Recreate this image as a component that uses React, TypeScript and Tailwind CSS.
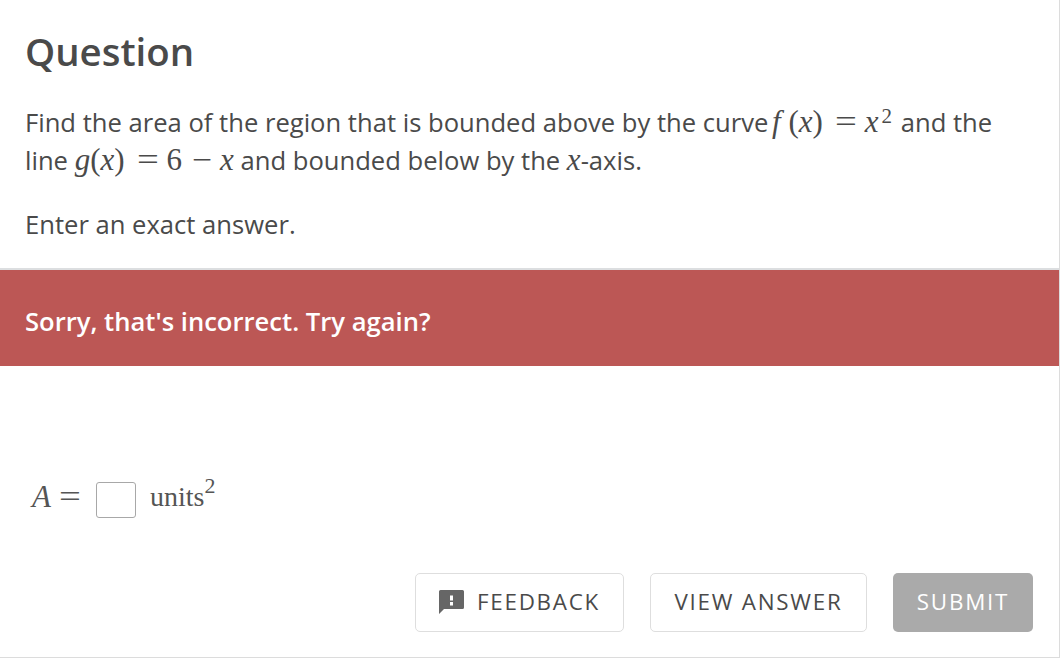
const sans = "font-['Open_Sans',sans-serif]";

function MathText({ children }: { children: React.ReactNode }) {
  return (
    <span className="font-['Liberation_Serif',serif] text-[31px] leading-none whitespace-nowrap">
      {children}
    </span>
  );
}

function Ital({ children }: { children: React.ReactNode }) {
  return <i className="italic">{children}</i>;
}

function Equals() {
  return (
    <span className="mr-[7px] ml-[11px] inline-block w-[24px] scale-x-[1.25] text-center">=</span>
  );
}

function Minus() {
  return (
    <span className="mr-[6px] ml-[8px] inline-block w-[24px] scale-x-[1.15] text-center">−</span>
  );
}

export default function App() {
  return (
    <div className={`${sans} flex h-[658px] w-[1060px] flex-col border-r border-b border-[#dcdcdc] bg-white text-[#4a4a4a]`}>
      {/* Question text */}
      <div className="h-[268px] shrink-0 px-[25px] pt-[26px]">
        <h1 className="text-[38.4px] leading-[50px] font-semibold">Question</h1>
        <p className="mt-[28px] text-[25.6px] leading-[38px]">
          Find the area of the region that is bounded above by the curve{" "}
          <MathText>
            <span className="-ml-[3px]">
              <Ital>f</Ital> (<Ital>x</Ital>)
            </span>
            <Equals />
            <Ital>x</Ital>
            <sup className="mr-[2px] ml-[3px] align-[-1px] text-[21px] leading-none">2</sup>
          </MathText>{" "}
          and the
          <br />
          line{" "}
          <MathText>
            <Ital>g</Ital>(<Ital>x</Ital>)
            <Equals />
            6
            <Minus />
            <Ital>x</Ital>
          </MathText>{" "}
          and bounded below by the{" "}
          <MathText>
            <Ital>x</Ital>
          </MathText>
          -axis.
        </p>
        <p className="mt-[26px] text-[25.6px] leading-[38px]">Enter an exact answer.</p>
      </div>

      {/* Result banner */}
      <div className="flex h-[98px] shrink-0 items-center border-t-2 border-[#dcdee0] bg-[#bc5755] px-[25px] pt-[9px] text-[25.6px] font-semibold text-white">
        Sorry, that's incorrect. Try again?
      </div>

      {/* Answer */}
      <div className="flex h-[207px] shrink-0 items-start pt-[113px] pl-[32px] font-['Liberation_Serif',serif] text-[#555555]">
        <span className="text-[31px] leading-[35px] whitespace-nowrap">
          <Ital>A</Ital>
          <span className="ml-[7px] inline-block w-[24px] scale-x-[1.25] text-center">=</span>
        </span>
        <div className="mt-[3px] ml-[14px] h-[36px] w-[40px] rounded-[3px] border border-[#a8a8a8] bg-white" />
        <span className="ml-[14px] text-[28px] leading-[35px]">
          units<sup className="align-[2px] text-[22px] leading-none">2</sup>
        </span>
      </div>

      {/* Actions */}
      <div className="flex items-start justify-end gap-[26px] pr-[26px]">
        <button className="flex h-[59px] w-[209px] items-center justify-center gap-[13px] rounded-[5px] border border-[#dedede] bg-white pb-[2px] text-[22.4px] font-medium tracking-[1.75px]">
          <svg width="25" height="25" viewBox="0 0 25 25" className="mt-[2px] shrink-0">
            <path
              fill="#666666"
              d="M1.5 0h22a1.5 1.5 0 0 1 1.5 1.5v16a1.5 1.5 0 0 1-1.5 1.5H5l-5 5V1.5A1.5 1.5 0 0 1 1.5 0z"
            />
            <rect x="11" y="5.5" width="3" height="5" fill="#ffffff" />
            <rect x="11" y="12" width="3" height="3.5" fill="#ffffff" />
          </svg>
          FEEDBACK
        </button>
        <button className="h-[59px] w-[217px] rounded-[5px] border border-[#dedede] bg-white pb-[2px] text-[22.4px] font-medium tracking-[1.75px]">
          VIEW ANSWER
        </button>
        <button className="h-[59px] w-[140px] rounded-[5px] bg-[#aaaaaa] pb-[2px] text-[22.4px] font-medium tracking-[1.75px] text-white">
          SUBMIT
        </button>
      </div>
    </div>
  );
}
